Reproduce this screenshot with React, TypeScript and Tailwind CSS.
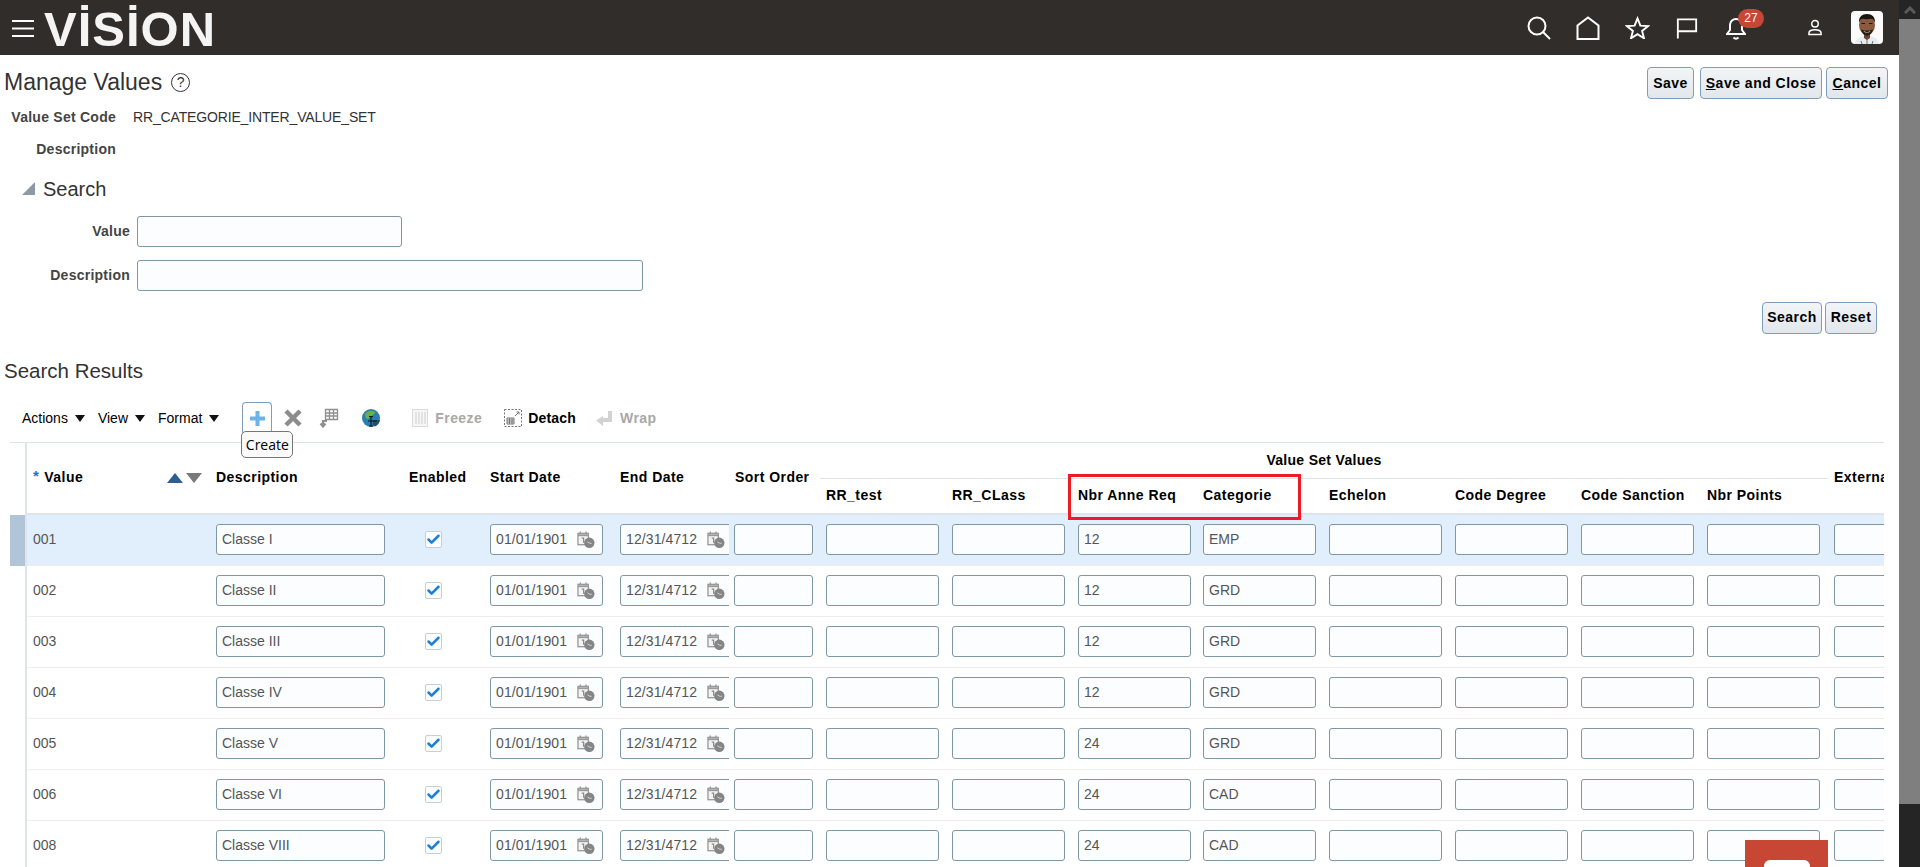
import { Check } from "lucide-react";

const font = { fontFamily: '"Liberation Sans", Arial, sans-serif' };

const rows = [
  ["001", "Classe I", "12", "EMP"],
  ["002", "Classe II", "12", "GRD"],
  ["003", "Classe III", "12", "GRD"],
  ["004", "Classe IV", "12", "GRD"],
  ["005", "Classe V", "24", "GRD"],
  ["006", "Classe VI", "24", "CAD"],
  ["008", "Classe VIII", "24", "CAD"],
];

const groupCols = ["RR_test", "RR_CLass", "Nbr Anne Req", "Categorie", "Echelon", "Code Degree", "Code Sanction", "Nbr Points"];

function TextBox({ value = "", className = "" }: { value?: string; className?: string }) {
  return (
    <div className={`h-[31px] bg-[#fbfdff] border border-[#7f97a3] rounded-[3px] pl-[5px] flex items-center text-[14px] text-[#555] ${className}`}>
      {value}
    </div>
  );
}

function Btn({ children, className = "" }: { children: React.ReactNode; className?: string }) {
  return (
    <button className={`h-[32px] rounded-[4px] border border-[#7f9db9] bg-gradient-to-b from-[#f2f5f7] to-[#e2e7ec] text-[14px] font-bold tracking-[0.5px] text-black flex items-center justify-center ${className}`}>
      {children}
    </button>
  );
}

function CalendarIcon() {
  return (
    <svg width="18" height="19" viewBox="0 0 19 19" className="shrink-0">
      <rect x="1" y="3" width="11" height="12" fill="#f3f3f3" stroke="#9a9a9a" strokeWidth="1.4" />
      <path d="M1 5h11" stroke="#9a9a9a" strokeWidth="2" />
      <path d="M3.5 1v3M9.5 1v3" stroke="#9a9a9a" strokeWidth="1.4" />
      <path d="M5 8h2v5" stroke="#8a8a8a" strokeWidth="1.3" fill="none" />
      <circle cx="13" cy="13" r="5.5" fill="#858585" />
      <path d="M11 12l2.5 1.5h2" stroke="#d8d8d8" strokeWidth="1" fill="none" />
    </svg>
  );
}

function DateBox({ value }: { value: string }) {
  return (
    <div className="h-[31px] bg-[#fbfdff] border border-[#7f97a3] rounded-[3px] pl-[5px] pr-[7px] flex items-center justify-between text-[14px] tracking-[0.1px] text-[#555] w-[113px]">
      <span>{value}</span>
      <CalendarIcon />
    </div>
  );
}

function Menu({ label }: { label: string }) {
  return (
    <div className="flex items-center gap-[7px] text-[14px] text-black">
      <span>{label}</span>
      <span className="w-0 h-0 border-l-[5px] border-r-[5px] border-t-[7px] border-l-transparent border-r-transparent border-t-[#111]" />
    </div>
  );
}

function Avatar() {
  return (
    <svg width="32" height="33" viewBox="0 0 32 33" className="rounded-[4px]">
      <rect width="32" height="33" fill="#fbfbfb" />
      <path d="M4 33c1-6 6-8 12-8s11 2 12 8z" fill="#e8ecef" />
      <path d="M10 30l1 3M22 30l-1 3M16 28v5" stroke="#6a7480" strokeWidth="1" />
      <path d="M13 21h6v6l-3 2-3-2z" fill="#6b4630" />
      <ellipse cx="16" cy="14" rx="8" ry="10" fill="#8a5a3e" />
      <path d="M8 12c-.5-6 3-9 8-9s8.500 3 8 9c-1-3-2-4-4-4.200-3 .5-6 .5-8 0-2 .3-3 1.200-4 4.200z" fill="#1d1512" />
      <path d="M10 18c1 5 3.500 6.500 6 6.500s5-1.500 6-6.500c-1 1.500-3 1.500-6 1.500s-5 0-6-1.500z" fill="#2a1c16" />
      <path d="M12.500 20c2 1.500 5 1.500 7 0-1 2-6 2-7 0z" fill="#fff" />
      <path d="M10.500 12.500h3.500M18 12.500h3.500" stroke="#1d1512" strokeWidth="1.200" />
    </svg>
  );
}

function TopBar() {
  return (
    <header className="h-[55px] bg-[#312d2a] flex items-center text-white shrink-0">
      <svg width="22" height="17" viewBox="0 0 22 17" className="ml-[12px] mr-[10px] mt-[2px]">
        <path d="M0 1h22M0 8.500h22M0 16h22" stroke="#fff" strokeWidth="2" />
      </svg>
      <span className="text-[49px] leading-[49px] font-bold tracking-[1px] text-[#f4f4f4] mt-[4px]">VİSİON</span>
      <div className="ml-auto flex items-center">
        <svg width="24" height="24" viewBox="0 0 24 24" fill="none" stroke="#fff" strokeWidth="2" className="mr-[25px]">
          <circle cx="10" cy="10" r="8.500" />
          <path d="M16 16l7 7" />
        </svg>
        <svg width="24" height="24" viewBox="0 0 24 24" fill="none" stroke="#fff" strokeWidth="2" className="mr-[25px]">
          <path d="M1.500 23V9.500L12 1.500l10.500 8V23z" />
        </svg>
        <svg width="25" height="23" viewBox="0 0 26 24" fill="none" stroke="#fff" strokeWidth="2" className="mr-[26px]">
          <path d="M13 2.500l3 7.500 8 .6-6.200 5 2 7.700L13 19l-6.800 4.300 2-7.700-6.200-5 8-.6z" />
        </svg>
        <svg width="22" height="22" viewBox="0 0 24 23" fill="none" stroke="#fff" strokeWidth="2" className="mr-[28px]">
          <path d="M2 23V2h20v13H2" />
        </svg>
        <div className="relative w-[20px] h-[24px] mr-[62px]">
          <svg width="20" height="24" viewBox="0 0 20 24" fill="none" stroke="#fff" strokeWidth="2">
            <path d="M1 18h18l-3-4V9a6 6 0 0 0-12 0v5zM7.500 21.500c1.500 1.500 3.500 1.500 5 0" />
          </svg>
          <span className="absolute left-[12px] -top-[7px] w-[26px] h-[19px] rounded-full bg-[#c74634] text-[12px] leading-[19px] text-center text-white">27</span>
        </div>
        <svg width="14" height="17" viewBox="0 0 15 17" fill="none" stroke="#fff" strokeWidth="1.600" className="mr-[29px]">
          <circle cx="7.500" cy="4.500" r="3.500" />
          <path d="M1 16v-1.500c0-2 2.500-3.500 6.500-3.500s6.500 1.500 6.500 3.500V16z" />
        </svg>
        <div className="mr-[16px]"><Avatar /></div>
      </div>
    </header>
  );
}

function Toolbar() {
  return (
    <div className="h-[46px] flex items-center pl-[22px] pb-[1px] relative">
      <Menu label="Actions" />
      <div className="ml-[13px]"><Menu label="View" /></div>
      <div className="ml-[13px]"><Menu label="Format" /></div>
      <div className="ml-[23px] w-[30px] h-[31px] border border-b-0 border-[#7f9db9] rounded-t-[4px] flex items-center justify-center relative mt-[-1px]">
        <svg width="17" height="17" viewBox="0 0 17 17"><path d="M8.500 1v15M1 8.500h15" stroke="#6db3ea" strokeWidth="4" /></svg>
        <div className="absolute left-[-2px] top-[28px] z-10 w-[52px] h-[27px] bg-[#fafafa] border border-[#767676] rounded-[5px] flex items-center justify-center text-[14px] text-black" style={{ fontFamily: '"Open Sans", sans-serif' }}>
          Create
        </div>
      </div>
      <svg width="18" height="18" viewBox="0 0 18 18" className="ml-[12px]"><path d="M2 2l14 14M16 2L2 16" stroke="#8c8c8c" strokeWidth="4.500" /></svg>
      <svg width="20" height="20" viewBox="0 0 20 20" fill="none" className="ml-[17px]">
        <path d="M6.500 1.500h12v10h-12zM6.500 5h12M10.500 1.500v10M14.500 1.500v10M6.500 8h12" stroke="#8f8f8f" strokeWidth="1.300" />
        <path d="M8 13H4v5M1.500 15.500l2.500 3 2.500-3" stroke="#8f8f8f" strokeWidth="2.200" />
      </svg>
      <svg width="20" height="20" viewBox="0 0 20 20" className="ml-[22px]">
        <circle cx="10" cy="10" r="9" fill="#2a7fb0" />
        <path d="M4 6c3-4 8-4 10-2 1 2-2 2-3 4-1 2-3 1-4 3-2 0-3-2-3-5z" fill="#6cb04a" />
        <path d="M12 12h7c-.5 3-2.500 5.500-5 6.500-2-1-3-3-2-6.500z" fill="#1f4f70" />
        <path d="M10 8.500v9.500M8 8.500h4M8 18h4M7 13h9" stroke="#111" strokeWidth="1.100" />
      </svg>
      <svg width="16" height="18" viewBox="0 0 16 18" className="ml-[31px]">
        <rect x="0.500" y="0.500" width="15" height="17" fill="#f6f6f6" stroke="#dcdcdc" />
        <path d="M4 3v12M7 3v12M10 3v12M13 3v12" stroke="#cfcfcf" strokeWidth="1" />
      </svg>
      <span className="ml-[7px] text-[14px] font-bold tracking-[0.4px] text-[#a8a8a8]">Freeze</span>
      <svg width="18" height="18" viewBox="0 0 18 18" fill="none" className="ml-[22px]">
        <rect x="0.500" y="0.500" width="17" height="17" stroke="#777" strokeDasharray="2 1.500" />
        <path d="M3 9h7v6H3zM3 11h7M3 13h7M5.500 9v6M8 9v6" stroke="#777" strokeWidth="1" />
        <path d="M11 7l4-4M12.500 3H15v2.500" stroke="#777" strokeWidth="1" />
      </svg>
      <span className="ml-[6px] text-[14px] font-bold tracking-[0.2px] text-black">Detach</span>
      <svg width="17" height="17" viewBox="0 0 17 17" className="ml-[20px]">
        <path d="M12 1h4v11H7v4L0 10.500 7 6v2h5z" fill="#d2d2d2" />
      </svg>
      <span className="ml-[7px] text-[14px] font-bold tracking-[0.4px] text-[#a8a8a8]">Wrap</span>
    </div>
  );
}

const thBase = "text-[14px] font-bold tracking-[0.45px] text-black text-left align-middle whitespace-nowrap border-b-2 border-[#dfe4ea] pl-[6px] overflow-hidden";

function ResultsTable() {
  return (
    <div className="relative ml-[10px] w-[1874px] overflow-hidden border-t border-[#dde3e9]">
      <table className="table-fixed border-separate border-spacing-0 w-[1905px]">
        <colgroup>
          <col className="w-[17px]" />
          <col className="w-[183px]" />
          <col className="w-[181px]" />
          <col className="w-[93px]" />
          <col className="w-[130px]" />
          <col className="w-[115px]" />
          <col className="w-[91px]" />
          <col className="w-[126px]" />
          <col className="w-[126px]" />
          <col className="w-[125px]" />
          <col className="w-[126px]" />
          <col className="w-[126px]" />
          <col className="w-[126px]" />
          <col className="w-[126px]" />
          <col className="w-[127px]" />
          <col className="w-[113px]" />
        </colgroup>
        <thead>
          <tr className="h-[36px]">
            <th rowSpan={2} className="border-r-2 border-[#dfe4ea] border-b-0" />
            <th rowSpan={2} className={thBase}>
              <div className="flex items-center pr-[8px]">
                <span className="text-[#1b76c2] text-[15px] leading-none mr-[5px] -mt-[5px]">*</span>
                <span>Value</span>
                <span className="ml-auto flex items-center gap-[3px]">
                  <span className="w-0 h-0 border-l-[8px] border-r-[8px] border-b-[10px] border-l-transparent border-r-transparent border-b-[#2f5f8f]" />
                  <span className="w-0 h-0 border-l-[8px] border-r-[8px] border-t-[10px] border-l-transparent border-r-transparent border-t-[#7a7a7a]" />
                </span>
              </div>
            </th>
            <th rowSpan={2} className={thBase}>Description</th>
            <th rowSpan={2} className={`${thBase} pl-[18px]`}>Enabled</th>
            <th rowSpan={2} className={thBase}>Start Date</th>
            <th rowSpan={2} className={thBase}>End Date</th>
            <th rowSpan={2} className={thBase}>Sort Order</th>
            <th colSpan={8} className="text-[14px] font-bold tracking-[0.3px] text-black text-center border-b border-[#dfe4ea]">Value Set Values</th>
            <th rowSpan={2} className={thBase}>External</th>
          </tr>
          <tr className="h-[36px]">
            {groupCols.map((c) => (
              <th key={c} className={thBase}>{c}</th>
            ))}
          </tr>
        </thead>
        <tbody>
          {rows.map((r, i) => {
            const cell = `p-0 h-[51px] border-b border-[#eeeeee] ${i === 0 ? "bg-[#e1effd]" : ""}`;
            return (
              <tr key={r[0]}>
                <td className={`p-0 border-r-2 border-[#dfe4ea] ${i === 0 ? "bg-[#b0c6d8]" : ""}`} />
                <td className={`${cell} pl-[6px] text-[14px] text-[#555]`}>{r[0]}</td>
                <td className={`${cell} pl-[6px]`}><TextBox value={r[1]} className="w-[169px]" /></td>
                <td className={`${cell} pl-[34px]`}>
                  <div className="w-[17px] h-[17px] bg-[#fbfdff] border border-[#c6cfd6] rounded-[2px] flex items-center justify-center">
                    <Check size={15} strokeWidth={4} className="text-[#1b7fd6]" />
                  </div>
                </td>
                <td className={`${cell} pl-[6px]`}><DateBox value="01/01/1901" /></td>
                <td className={`${cell} pl-[6px] overflow-hidden`}>
                  <DateBox value="12/31/4712" />
                </td>
                <td className={`${cell} pl-[5px]`}><TextBox className="w-[79px]" /></td>
                <td className={`${cell} pl-[6px]`}><TextBox className="w-[113px]" /></td>
                <td className={`${cell} pl-[6px]`}><TextBox className="w-[113px]" /></td>
                <td className={`${cell} pl-[6px]`}><TextBox value={r[2]} className="w-[113px]" /></td>
                <td className={`${cell} pl-[6px]`}><TextBox value={r[3]} className="w-[113px]" /></td>
                <td className={`${cell} pl-[6px]`}><TextBox className="w-[113px]" /></td>
                <td className={`${cell} pl-[6px]`}><TextBox className="w-[113px]" /></td>
                <td className={`${cell} pl-[6px]`}><TextBox className="w-[113px]" /></td>
                <td className={`${cell} pl-[6px]`}><TextBox className="w-[113px]" /></td>
                <td className={`${cell} pl-[6px]`}><TextBox className="w-[113px]" /></td>
              </tr>
            );
          })}
        </tbody>
      </table>
      <div className="absolute left-[1058px] top-[31px] w-[233px] h-[46px] border-[3px] border-[#ed1c24]" />
    </div>
  );
}

export default function App() {
  return (
    <div className="h-screen w-full overflow-hidden flex bg-white relative" style={font}>
      <div className="flex-1 min-w-0 flex flex-col">
        <TopBar />
        <div className="flex justify-between pl-[4px] pr-[11px] pt-[12px] h-[52px]">
          <div className="flex items-center gap-[9px] h-[30px]">
            <h1 className="text-[23px] leading-[30px] text-[#333]">Manage Values</h1>
            <span className="w-[19px] h-[19px] rounded-full border border-[#333] text-[14px] leading-[17px] text-center text-[#333]">?</span>
          </div>
          <div className="flex">
            <Btn className="w-[47px]">Save</Btn>
            <Btn className="ml-[6px] w-[122px]"><u>S</u>ave and Close</Btn>
            <Btn className="ml-[4px] w-[62px]"><u>C</u>ancel</Btn>
          </div>
        </div>
        <div className="flex flex-col gap-[11px] text-[14px]">
          <div className="flex items-center h-[21px]">
            <span className="w-[116px] text-right font-bold tracking-[0.25px] text-[#444]">Value Set Code</span>
            <span className="ml-[17px] tracking-[-0.15px] text-[#333]">RR_CATEGORIE_INTER_VALUE_SET</span>
          </div>
          <div className="flex items-center h-[21px]">
            <span className="w-[116px] text-right font-bold tracking-[0.25px] text-[#444]">Description</span>
          </div>
        </div>
        <div className="flex items-center h-[28px] mt-[15px] pl-[22px] gap-[8px]">
          <span className="w-0 h-0 border-l-[13px] border-b-[13px] border-l-transparent border-b-[#8d99a3]" />
          <h2 className="text-[20px] text-[#333]">Search</h2>
        </div>
        <div className="mt-[13px] flex items-center h-[31px]">
          <span className="w-[130px] text-right font-bold tracking-[0.25px] text-[14px] text-[#444]">Value</span>
          <TextBox className="ml-[7px] w-[265px]" />
        </div>
        <div className="mt-[13px] flex items-center h-[31px]">
          <span className="w-[130px] text-right font-bold tracking-[0.25px] text-[14px] text-[#444]">Description</span>
          <TextBox className="ml-[7px] w-[506px]" />
        </div>
        <div className="flex justify-end gap-[3px] pr-[22px] mt-[11px]">
          <Btn className="w-[60px]">Search</Btn>
          <Btn className="w-[52px]">Reset</Btn>
        </div>
        <h2 className="text-[20.5px] leading-[28px] text-[#333] pl-[4px] mt-[23px]">Search Results</h2>
        <div className="mt-[11px]"><Toolbar /></div>
        <ResultsTable />
      </div>
      <div className="w-[21px] shrink-0 flex flex-col bg-[#252525]">
        <div className="h-[19px] flex items-center justify-center">
          <svg width="12" height="8" viewBox="0 0 12 8" fill="none"><path d="M1 7l5-5 5 5" stroke="#5a5a5a" strokeWidth="3" /></svg>
        </div>
        <div className="h-[785px] bg-[#7f7f7f]" />
      </div>
      <div className="absolute left-[1745px] top-[840px] w-[83px] h-[27px] bg-[#c74634] overflow-hidden">
        <div className="ml-[19px] mt-[20px] w-[46px] h-[20px] bg-white rounded-[6px]" />
      </div>
    </div>
  );
}
